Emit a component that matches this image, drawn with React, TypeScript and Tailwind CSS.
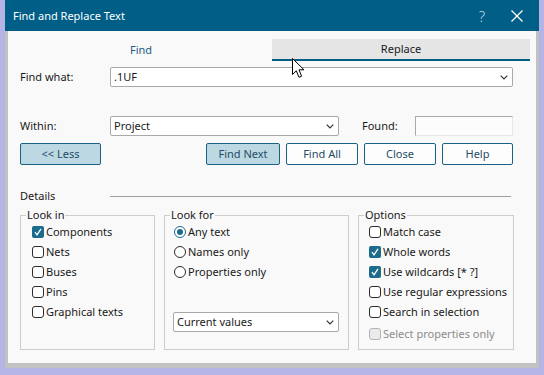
import React from "react";

const FONT = { fontFamily: '"Noto Sans", "Open Sans", sans-serif' };

function Chevron() {
  return (
    <svg width="8" height="5" viewBox="0 0 8 5" className="shrink-0">
      <polyline points="0.7,0.7 4,4 7.3,0.7" fill="none" stroke="#333" strokeWidth="1.2" />
    </svg>
  );
}

function Combo({ text, w }: { text: string; w: string }) {
  return (
    <div className={`${w} h-[20px] bg-white border border-[#a9a9a9] rounded-[2px] flex items-center justify-between pl-[3px] pr-[4px]`}>
      <span className="text-[11px] leading-[16px] text-[#1a1a1a] whitespace-nowrap">{text}</span>
      <Chevron />
    </div>
  );
}

function Btn({ label, w, primary }: { label: string; w: string; primary?: boolean }) {
  return (
    <div
      className={`${w} h-[22px] border border-[#1b6282] rounded-[2px] flex items-center justify-center text-[11px] whitespace-nowrap text-[#1f4d68] ${
        primary ? "bg-[#bcd8e3]" : "bg-[#fdfdfd]"
      }`}
    >
      {label}
    </div>
  );
}

function Check({ label, checked, disabled }: { label: string; checked?: boolean; disabled?: boolean }) {
  return (
    <div className="h-[20px] flex items-center">
      {checked ? (
        <div className="w-[12px] h-[12px] shrink-0 rounded-[2px] bg-[#1b6c8c] flex items-center justify-center">
          <svg width="10" height="10" viewBox="0 0 10 10">
            <polyline points="2,5.2 4,7.8 8,1.8" fill="none" stroke="#fff" strokeWidth="1.3" />
          </svg>
        </div>
      ) : disabled ? (
        <div className="w-[12px] h-[12px] shrink-0 rounded-[3px] border border-[#b4b4b4] bg-[#ebebeb]" />
      ) : (
        <div className="w-[12px] h-[12px] shrink-0 rounded-[3px] border border-[#2b2b2b] bg-white" />
      )}
      <span
        className={`ml-[2px] text-[11px] leading-[16px] whitespace-nowrap ${disabled ? "text-[#8c8c8c]" : "text-[#1a1a1a]"}`}
      >
        {label}
      </span>
    </div>
  );
}

function Radio({ label, checked }: { label: string; checked?: boolean }) {
  return (
    <div className="h-[20px] flex items-center">
      {checked ? (
        <div className="w-[12px] h-[12px] shrink-0 rounded-full border border-[#1b6c8c] bg-white flex items-center justify-center">
          <div className="w-[6px] h-[6px] rounded-full bg-[#1b6c8c]" />
        </div>
      ) : (
        <div className="w-[12px] h-[12px] shrink-0 rounded-full border border-[#2b2b2b] bg-white" />
      )}
      <span className="ml-[2px] text-[11px] leading-[16px] whitespace-nowrap text-[#1a1a1a]">{label}</span>
    </div>
  );
}

function Group({ title, w, pl, children }: { title: string; w: string; pl: string; children: React.ReactNode }) {
  return (
    <div className={`relative ${w} h-[135px] border border-[#cdcdcd] ${pl} pt-[6px]`}>
      <span className="absolute -top-[9px] left-[5px] px-[1px] bg-[#f9f9f9] text-[11px] leading-[16px] whitespace-nowrap text-[#1a1a1a]">
        {title}
      </span>
      {children}
    </div>
  );
}

export default function App() {
  return (
    <div className="relative w-[544px] h-[375px] bg-[#b4b4e6] overflow-hidden" style={FONT}>
      <div className="ml-[5px] w-[534px] h-[368px] flex flex-col">
        {/* Title bar */}
        <div className="h-[31px] bg-[#005e87] flex items-center pl-[8px] shrink-0">
          <span className="text-white text-[11px] leading-[16px] whitespace-nowrap">Find and Replace Text</span>
          <span className="ml-auto text-[15px] leading-[16px] font-light text-[#c4d6e0] mr-[26px]">?</span>
          <svg width="12" height="12" viewBox="0 0 12 12" className="mr-[16px]">
            <line x1="0.5" y1="0.5" x2="11.5" y2="11.5" stroke="#fff" strokeWidth="1.2" />
            <line x1="11.5" y1="0.5" x2="0.5" y2="11.5" stroke="#fff" strokeWidth="1.2" />
          </svg>
        </div>
        {/* Body */}
        <div className="flex-1 bg-[#f9f9f9] border-l-[3px] border-r-[3px] border-b-[5px] border-[#c2c2c2] pt-[8px]">
          {/* Tabs */}
          <div className="flex pl-[2px] h-[22px]">
            <div className="w-[262px] flex items-center justify-center text-[11px] text-[#1f5a85]">Find</div>
            <div className="w-[258px] flex items-center justify-center text-[11px] text-[#1a1a1a] bg-[#e5e5e5] border-b-2 border-[#005e87]">
              Replace
            </div>
          </div>
          <div className="pl-[12px]">
            {/* Find what */}
            <div className="mt-[6px] flex items-center h-[20px]">
              <span className="w-[90px] text-[11px] text-[#1a1a1a] whitespace-nowrap">Find what:</span>
              <Combo text=".1UF" w="w-[403px]" />
            </div>
            {/* Within */}
            <div className="mt-[29px] flex items-center h-[20px]">
              <span className="w-[90px] text-[11px] text-[#1a1a1a]">Within:</span>
              <Combo text="Project" w="w-[229px]" />
              <span className="ml-[23px] w-[53px] text-[11px] text-[#1a1a1a]">Found:</span>
              <div className="w-[98px] h-[20px] border-t border-l border-[#a9a9a9] border-r border-b border-r-[#e6e6e6] border-b-[#e6e6e6] bg-[#fcfcfc]" />
            </div>
            {/* Buttons */}
            <div className="mt-[7px] flex items-center h-[22px]">
              <Btn label="<< Less" w="w-[81px]" primary />
              <div className="ml-[105px]">
                <Btn label="Find Next" w="w-[74px]" primary />
              </div>
              <div className="ml-[6px]">
                <Btn label="Find All" w="w-[72px]" />
              </div>
              <div className="ml-[6px]">
                <Btn label="Close" w="w-[72px]" />
              </div>
              <div className="ml-[6px]">
                <Btn label="Help" w="w-[71px]" />
              </div>
            </div>
            {/* Details */}
            <div className="mt-[23px] flex items-center h-[16px]">
              <span className="w-[90px] text-[11px] leading-[16px] text-[#1a1a1a]">Details</span>
              <div className="w-[401px] h-px bg-[#a0a0a0]" />
            </div>
            {/* Groups */}
            <div className="mt-[11px] flex gap-[9px]">
              <Group title="Look in" w="w-[135px]" pl="pl-[11px]">
                <Check label="Components" checked />
                <Check label="Nets" />
                <Check label="Buses" />
                <Check label="Pins" />
                <Check label="Graphical texts" />
              </Group>
              <Group title="Look for" w="w-[185px]" pl="pl-[9px]">
                <Radio label="Any text" checked />
                <Radio label="Names only" />
                <Radio label="Properties only" />
                <div className="mt-[30px] -ml-[1px]">
                  <Combo text="Current values" w="w-[166px]" />
                </div>
              </Group>
              <Group title="Options" w="w-[156px]" pl="pl-[10px]">
                <Check label="Match case" />
                <Check label="Whole words" checked />
                <Check label="Use wildcards [* ?]" checked />
                <Check label="Use regular expressions" />
                <Check label="Search in selection" />
                <div className="mt-[2px]">
                  <Check label="Select properties only" disabled />
                </div>
              </Group>
            </div>
          </div>
        </div>
      </div>
      {/* Mouse cursor */}
      <svg className="absolute left-[292px] top-[58px]" width="14" height="21" viewBox="0 0 14 21">
        <path
          d="M0.5,0.5 L0.5,16.5 L4.3,12.8 L7,19.3 L9.6,18.2 L7,11.8 L12,11.8 Z"
          fill="#fff"
          stroke="#000"
          strokeWidth="1"
          strokeLinejoin="miter"
        />
      </svg>
    </div>
  );
}
